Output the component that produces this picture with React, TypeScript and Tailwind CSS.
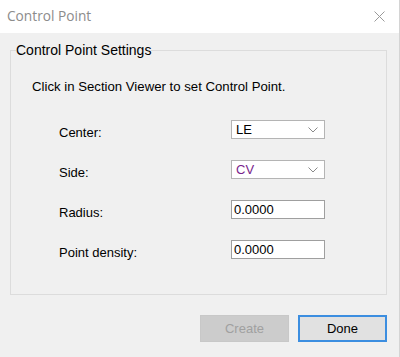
import React from "react";

const Chevron = () => (
  <svg width="10" height="6" viewBox="0 0 10 6" className="mr-1.5">
    <path d="M0.5 0.5 L5 5 L9.5 0.5" fill="none" stroke="#8a8a8a" strokeWidth="1" />
  </svg>
);

type FieldRowProps = {
  label: string;
  children: React.ReactNode;
};

const FieldRow = ({ label, children }: FieldRowProps) => (
  <div className="flex h-[19px] items-start">
    <span className="box-content w-[172px] pl-[48px] pt-[5px] text-[13px] leading-[15px] text-black">{label}</span>
    {children}
  </div>
);

export default function App() {
  return (
    <div
      className="flex h-[357px] w-[400px] flex-col bg-[#f0f0f0]"
      style={{ fontFamily: '"Liberation Sans", Arial, sans-serif' }}
    >
      <header className="flex h-[33px] items-center justify-between border-r border-[#d4d4d4] bg-white pl-[7px] pr-[14px]">
        <span className="text-[13.7px] text-[#8c8c8c]" style={{ fontFamily: '"Open Sans", "Noto Sans", sans-serif' }}>
          Control Point
        </span>
        <svg width="11" height="11" viewBox="0 0 11 11">
          <path d="M0.5 0.5 L10.5 10.5 M10.5 0.5 L0.5 10.5" stroke="#9a9a9a" strokeWidth="1" />
        </svg>
      </header>

      <main className="flex flex-1 flex-col border-r border-[#d4d4d4] pl-[10px] pr-[12px]">
        <fieldset className="relative mt-[17px] h-[245px] border border-[#dcdcdc]">
          <span className="absolute left-[5px] top-[-10px] bg-[#f0f0f0] text-[14px] leading-[18px] text-black">
            Control Point Settings
          </span>
          <p className="ml-[21px] mt-[26px] text-[13.2px] leading-[19px] text-black">
            Click in Section Viewer to set Control Point.
          </p>

          <div className="mt-[24px] flex flex-col gap-[21px]">
            <FieldRow label="Center:">
              <div className="flex h-[19px] w-[94px] items-center justify-between border border-[#b4b4b4] bg-white pl-1 pt-px text-[13px] text-black">
                LE
                <Chevron />
              </div>
            </FieldRow>
            <FieldRow label="Side:">
              <div className="flex h-[19px] w-[94px] items-center justify-between border border-[#b4b4b4] bg-white pl-1 pt-px text-[13px] text-[#7a1f8c]">
                CV
                <Chevron />
              </div>
            </FieldRow>
            <FieldRow label="Radius:">
              <div className="flex h-[19px] w-[94px] items-center border border-[#9f9f9f] bg-white pl-[2px] pt-px text-[13px] text-black">
                0.0000
              </div>
            </FieldRow>
            <FieldRow label="Point density:">
              <div className="flex h-[19px] w-[94px] items-center border border-[#9f9f9f] bg-white pl-[2px] pt-px text-[13px] text-black">
                0.0000
              </div>
            </FieldRow>
          </div>
        </fieldset>

        <div className="mt-[20px] flex justify-end gap-[9px]">
          <button
            type="button"
            disabled
            className="h-[27px] w-[89px] border border-[#c8c8c8] bg-[#cccccc] text-[13px] text-[#a0a0a0]"
          >
            Create
          </button>
          <button
            type="button"
            className="h-[27px] w-[89px] border-2 border-[#3c8ee0] bg-[#e1e1e1] text-[13px] text-black"
          >
            Done
          </button>
        </div>
      </main>
    </div>
  );
}
